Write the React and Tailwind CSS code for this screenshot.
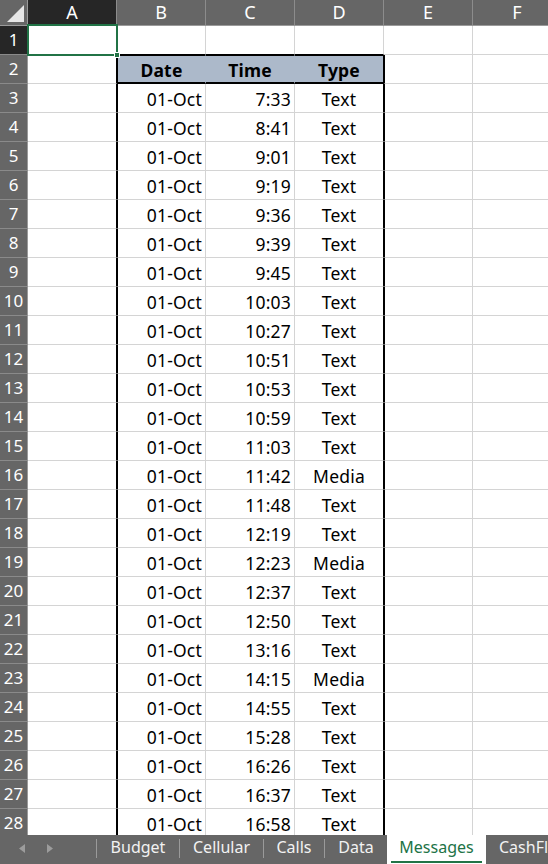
import React from 'react'

const cols = ['A', 'B', 'C', 'D', 'E', 'F']

const rows = [
  ['7:33', 'Text'], ['8:41', 'Text'], ['9:01', 'Text'], ['9:19', 'Text'],
  ['9:36', 'Text'], ['9:39', 'Text'], ['9:45', 'Text'], ['10:03', 'Text'],
  ['10:27', 'Text'], ['10:51', 'Text'], ['10:53', 'Text'], ['10:59', 'Text'],
  ['11:03', 'Text'], ['11:42', 'Media'], ['11:48', 'Text'], ['12:19', 'Text'],
  ['12:23', 'Media'], ['12:37', 'Text'], ['12:50', 'Text'], ['13:16', 'Text'],
  ['14:15', 'Media'], ['14:55', 'Text'], ['15:28', 'Text'], ['16:26', 'Text'],
  ['16:37', 'Text'], ['16:58', 'Text'],
]

const font = { fontFamily: '"Noto Sans", "Open Sans", sans-serif' }

function RowNum({ n, active }) {
  return (
    <div className={`w-[28px] shrink-0 h-[29px] flex items-center justify-center text-[17px] text-white border-b border-r border-b-[#8a8a8a] border-r-[#9a9a9a] ${active ? 'bg-[#262626]' : 'bg-[#666666]'}`}>
      {n}
    </div>
  )
}

function Cell({ className = '', children }) {
  return (
    <div className={`w-[89px] shrink-0 h-[29px] flex items-center pt-[2px] border-r border-b border-[#d4d4d4] text-[17.5px] text-black tracking-[0.2px] ${className}`}>
      {children}
    </div>
  )
}

function DataRow({ n, time, type }) {
  return (
    <div className="flex">
      <RowNum n={n} />
      <Cell className="border-r-black" />
      <Cell className="border-l border-l-black justify-end pr-[3px]">01-Oct</Cell>
      <Cell className="justify-end pr-[3px]">{time}</Cell>
      <Cell className="justify-center border-r-black">{type}</Cell>
      <Cell className="border-l border-l-black" />
      <Cell />
    </div>
  )
}

function Tab({ label, w, active }) {
  if (active) {
    return (
      <div className={`${w} shrink-0 h-full bg-white flex items-center justify-center pb-[5px] relative text-[#217346]`}>
        {label}
        <div className="absolute left-[4px] right-[4px] bottom-[1px] h-[2px] bg-[#217346]" />
      </div>
    )
  }
  return <div className={`${w} shrink-0 h-full flex items-center justify-center pb-[5px]`}>{label}</div>
}

export default function App() {
  return (
    <div className="w-[548px] h-[864px] overflow-hidden bg-white flex flex-col" style={font}>
      <div className="flex-1 overflow-hidden">
        {/* column headers */}
        <div className="flex h-[26px]">
          <div className="w-[28px] shrink-0 h-full bg-[#666666] border-r border-b border-[#9a9a9a] relative">
            <svg className="absolute right-[3px] bottom-[3px]" width="17" height="17" viewBox="0 0 17 17">
              <polygon points="17,0 17,17 0,17" fill="#e6e6e6" />
            </svg>
          </div>
          {cols.map((c, i) => (
            <div
              key={c}
              className={`w-[89px] shrink-0 h-full flex items-center justify-center text-[18px] text-white border-r border-b border-r-[#8c8c8c] border-b-[#9a9a9a] ${i === 0 ? 'bg-[#262626]' : 'bg-[#666666]'}`}
            >
              {c}
            </div>
          ))}
        </div>

        {/* row 1 */}
        <div className="flex">
          <RowNum n={1} active />
          <Cell className="relative">
            <div className="absolute -top-[2px] -left-px right-[-2px] -bottom-[2px] border-2 border-[#217346]" />
            <div className="absolute right-[-4px] bottom-[-4px] w-[6px] h-[6px] bg-[#217346] border border-white" />
          </Cell>
          <Cell className="border-b-black" />
          <Cell className="border-b-black" />
          <Cell className="border-b-black" />
          <Cell />
          <Cell />
        </div>

        {/* row 2 - table header */}
        <div className="flex">
          <RowNum n={2} />
          <Cell className="border-r-black" />
          <Cell className="bg-[#acb9ca] border-l border-l-black border-t border-t-black border-b-2 border-b-black border-r-[#acb9ca] justify-center font-bold">Date</Cell>
          <Cell className="bg-[#acb9ca] border-t border-t-black border-b-2 border-b-black border-r-[#acb9ca] justify-center font-bold">Time</Cell>
          <Cell className="bg-[#acb9ca] border-t border-t-black border-b-2 border-b-black border-r-black justify-center font-bold">Type</Cell>
          <Cell className="border-l border-l-black" />
          <Cell />
        </div>

        {rows.map((r, i) => (
          <DataRow key={i} n={i + 3} time={r[0]} type={r[1]} />
        ))}
      </div>

      {/* sheet tabs */}
      <div className="h-[29px] shrink-0 bg-[#666666] flex items-stretch text-[16px] text-[#f2f2f2] overflow-hidden">
        <div className="w-[96px] shrink-0 flex items-center pb-[2px]">
          <svg className="ml-[19px]" width="6" height="9" viewBox="0 0 6 9">
            <polygon points="6,0 6,9 0,4.5" fill="#9c9c9c" />
          </svg>
          <svg className="ml-[22px]" width="6" height="9" viewBox="0 0 6 9">
            <polygon points="0,0 0,9 6,4.5" fill="#9c9c9c" />
          </svg>
        </div>
        <div className="w-px shrink-0 mt-[4px] mb-[6px] bg-[#9a9a9a]" />
        <Tab label="Budget" w="w-[82px]" />
        <div className="w-px shrink-0 mt-[4px] mb-[6px] bg-[#9a9a9a]" />
        <Tab label="Cellular" w="w-[83px]" />
        <div className="w-px shrink-0 mt-[4px] mb-[6px] bg-[#9a9a9a]" />
        <Tab label="Calls" w="w-[60px]" />
        <div className="w-px shrink-0 mt-[4px] mb-[6px] bg-[#9a9a9a]" />
        <Tab label="Data" w="w-[62px]" />
        <Tab label="Messages" w="w-[99px]" active />
        <div className="pl-[13px] pb-[5px] shrink-0 flex items-center whitespace-nowrap">CashFlow</div>
      </div>
    </div>
  )
}
